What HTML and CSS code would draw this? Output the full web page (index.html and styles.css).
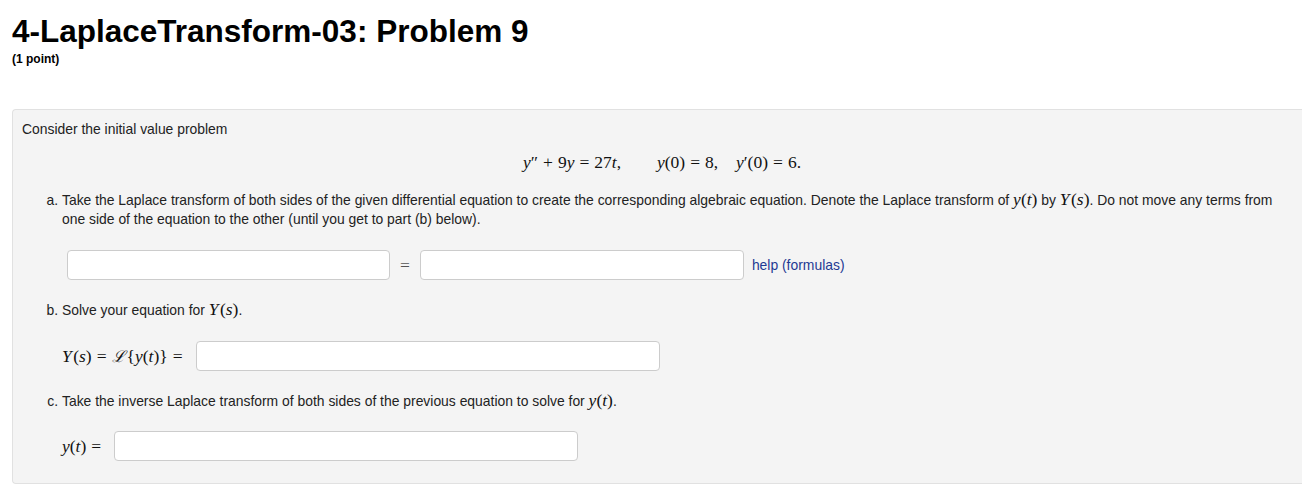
FILE: index.html
```html
<!DOCTYPE html>
<html>
<head>
<meta charset="utf-8">
<link rel="stylesheet" href="styles.css">
</head>
<body>
<div class="page">
  <h1 class="title">4-LaplaceTransform-03: Problem 9</h1>
  <div class="points">(1 point)</div>
  <div class="well">
    <p class="intro">Consider the initial value problem</p>
    <div class="display">
      <span class="m"><i>y</i>″<span class="op">+</span>9<i>y</i><span class="op">=</span>27<i>t</i>,</span>
      <span class="m gap1"><i>y</i>(0)<span class="op">=</span>8,</span>
      <span class="m gap2"><i>y</i>′(0)<span class="op">=</span>6.</span>
    </div>
    <ol class="parts">
      <li class="part">
        <p class="ptext">Take the Laplace transform of both sides of the given differential equation to create the corresponding algebraic equation. Denote the Laplace transform of <span class="m"><i>y</i>(<i>t</i>)</span> by <span class="m"><i>Y</i>&#8202;(<i>s</i>)</span>. Do not move any terms from one side of the equation to the other (until you get to part (b) below).</p>
        <div class="row row-a">
          <input class="ans w322" type="text">
          <span class="m eq">=</span>
          <input class="ans w323" type="text">
          <a class="help" href="#">help (formulas)</a>
        </div>
      </li>
      <li class="part">
        <p class="ptext">Solve your equation for <span class="m"><i>Y</i>&#8202;(<i>s</i>)</span>.</p>
        <div class="row row-b">
          <span class="m lhs"><i>Y</i>&#8202;(<i>s</i>)<span class="op">=</span><span class="script">ℒ</span>{<i>y</i>(<i>t</i>)}<span class="op">=</span></span>
          <input class="ans w463" type="text">
        </div>
      </li>
      <li class="part">
        <p class="ptext">Take the inverse Laplace transform of both sides of the previous equation to solve for <span class="m"><i>y</i>(<i>t</i>)</span>.</p>
        <div class="row row-c">
          <span class="m lhs"><i>y</i>(<i>t</i>)<span class="op">=</span></span>
          <input class="ans w463" type="text">
        </div>
      </li>
    </ol>
  </div>
</div>
</body>
</html>
```

FILE: styles.css
```css
html, body {
  margin: 0;
  padding: 0;
  background: #ffffff;
  overflow: hidden;
}
body {
  font-family: "Liberation Sans", Arial, sans-serif;
  font-size: 13.9px;
  color: #222;
}
.page {
  padding-left: 12px;
}
.title {
  font-size: 31.5px;
  font-weight: bold;
  color: #000;
  margin: 13px 0 0 0;
  line-height: 36px;
}
.points {
  font-size: 12px;
  font-weight: bold;
  color: #000;
  margin-top: 2px;
  line-height: 16px;
}
.well {
  margin-top: 42px;
  background: #f4f4f4;
  border: 1px solid #e1e1e1;
  border-right: none;
  border-radius: 4px 0 0 4px;
  padding: 10px 0 22px 9px;
}
.intro {
  margin: 0;
  line-height: 19px;
}
.m {
  font-family: "Liberation Serif", "DejaVu Serif", serif;
  font-size: 17.5px;
  color: #111;
}
.m i {
  font-style: italic;
}
.op {
  margin: 0 5px;
}
.script {
  font-family: "DejaVu Serif", serif;
  font-style: italic;
  font-size: 16px;
  margin-right: 2px;
}
.display {
  text-align: center;
  margin: 13px 0 0 0;
  line-height: 20px;
  width: 1280px;
}
.gap1 { margin-left: 32px; }
.gap2 { margin-left: 14px; }
.parts {
  list-style: lower-alpha;
  margin: 17px 0 0 0;
  padding-left: 40px;
  width: 1228px;
}
.part {
  line-height: 19px;
}
.ptext {
  margin: 0;
}
.row {
  display: flex;
  align-items: center;
  gap: 8px;
  height: 30px;
}
.row-a {
  margin-top: 21px;
  margin-bottom: 20px;
  padding-left: 5px;
}
.row-b {
  margin-top: 21px;
  margin-bottom: 20px;
}
.row-c {
  margin-top: 20px;
}
.ans {
  box-sizing: border-box;
  height: 30px;
  border: 1px solid #cccccc;
  border-radius: 4px;
  background: #fff;
  margin: 0;
  padding: 4px 6px;
}
.w322 { width: 323px; }
.w323 { width: 324px; }
.w463 { width: 464px; }
.eq {
  color: #555;
  margin: 0 2px;
}
.help {
  font-size: 13.9px;
  color: #1f3a93;
  text-decoration: none;
}
.lhs {
  white-space: nowrap;
}
```
